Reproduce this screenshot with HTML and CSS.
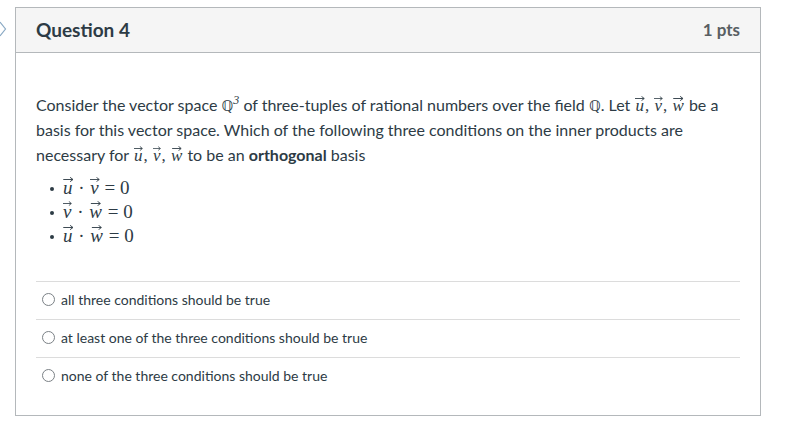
FILE: index.html
```html
<!DOCTYPE html>
<html>
<head>
<meta charset="utf-8">
<link rel="stylesheet" href="styles.css">
</head>
<body>
<div class="page">
  <svg class="chevron" width="8" height="16" viewBox="0 0 8 16"><path d="M0 1 L5.5 8 L0 15" fill="none" stroke="#8aa9c4" stroke-width="1.2"/></svg>
  <div class="card">
    <div class="card-header">
      <span class="title">Question 4</span>
      <span class="pts">1 pts</span>
    </div>
    <div class="card-body">
      <p class="question">Consider the vector space <span class="math"><span class="bb">ℚ</span><sup>3</sup></span> of three-tuples of rational numbers over the field <span class="math"><span class="bb">ℚ</span></span>. Let <span class="math"><span class="vec">u</span>, <span class="vec">v</span>, <span class="vec">w</span></span> be a basis for this vector space. Which of the following three conditions on the inner products are necessary for <span class="math"><span class="vec">u</span>, <span class="vec">v</span>, <span class="vec">w</span></span> to be an <strong>orthogonal</strong> basis</p>
      <ul class="conds">
        <li><span class="math"><span class="vec">u</span> · <span class="vec">v</span> = 0</span></li>
        <li><span class="math"><span class="vec">v</span> · <span class="vec">w</span> = 0</span></li>
        <li><span class="math"><span class="vec">u</span> · <span class="vec">w</span> = 0</span></li>
      </ul>
      <div class="answers">
        <label class="answer"><span class="radio"></span><span>all three conditions should be true</span></label>
        <label class="answer"><span class="radio"></span><span>at least one of the three conditions should be true</span></label>
        <label class="answer"><span class="radio"></span><span>none of the three conditions should be true</span></label>
      </div>
    </div>
  </div>
</div>
</body>
</html>
```

FILE: styles.css
```css
html, body {
  margin: 0;
  padding: 0;
  background: #ffffff;
}
body {
  font-family: Lato, "Open Sans", sans-serif;
  color: #2d3b45;
}
.page {
  position: relative;
  padding: 7px 0 0 15px;
}
.chevron {
  position: absolute;
  left: 0;
  top: 21px;
}
.card {
  width: 744px;
  border: 1px solid #b4b8bb;
}
.card-header {
  display: flex;
  justify-content: space-between;
  align-items: center;
  height: 44px;
  padding: 0 20px;
  background: #f5f5f5;
  border-bottom: 1px solid #b4b8bb;
}
.title {
  font-size: 19px;
  font-weight: 700;
  color: #2d3b45;
  margin-top: -2px;
}
.pts {
  font-size: 17px;
  font-weight: 700;
  color: #585e63;
  margin-top: -2px;
}
.card-body {
  padding: 39px 20px 20px;
}
.question {
  margin: 0;
  font-size: 16px;
  line-height: 25px;
}
.question strong {
  font-weight: 700;
}
.math {
  font-family: "Liberation Serif", "DejaVu Serif", serif;
  font-size: 17px;
  line-height: 1;
}
.bb {
  font-family: "DejaVu Sans", sans-serif;
  font-size: 15px;
  font-weight: 400;
}
.math sup {
  font-size: 12px;
  font-style: italic;
  line-height: 0;
  vertical-align: 7px;
}
.vec {
  position: relative;
  display: inline-block;
  font-style: italic;
  line-height: 1;
  padding: 0 1px;
}
.vec::after {
  content: "";
  position: absolute;
  left: 1px;
  right: 0;
  top: -1px;
  height: 5px;
  background: no-repeat center/100% 100% url("data:image/svg+xml;utf8,<svg xmlns='http://www.w3.org/2000/svg' width='10' height='5' viewBox='0 0 10 5'><path d='M0 2.5 H9 M6.5 0.3 L9.3 2.5 L6.5 4.7' fill='none' stroke='%232d3b45' stroke-width='0.9'/></svg>");
}
.conds {
  margin: 9px 0 0;
  padding-left: 26px;
  list-style: none;
}
.conds li {
  position: relative;
  line-height: 24px;
  height: 24px;
}
.conds li .math {
  font-size: 19px;
}
.conds li::before {
  content: "";
  position: absolute;
  left: -12px;
  top: 11px;
  width: 4px;
  height: 4px;
  border-radius: 50%;
  background: #2d3b45;
}
.answers {
  margin-top: 33px;
}
.answer {
  display: flex;
  align-items: center;
  height: 34px;
  padding-bottom: 3px;
  border-top: 1px solid #dcdcdc;
  font-size: 14px;
  color: #2d3b45;
}
.radio {
  width: 11px;
  height: 11px;
  border: 1px solid #7b8186;
  border-radius: 50%;
  margin: 0 6px 0 6px;
  flex-shrink: 0;
}
```
